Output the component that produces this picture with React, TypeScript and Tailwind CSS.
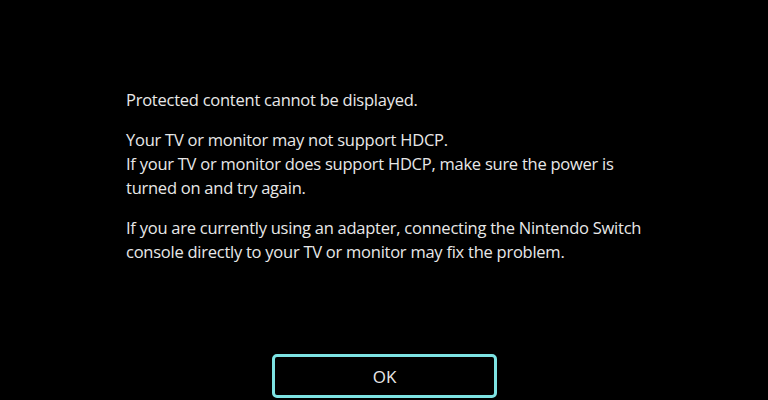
export default function App() {
  return (
    <main
      className="h-[400px] w-[768px] overflow-hidden bg-black text-[#e8e8e8]"
      style={{ fontFamily: '"Open Sans", "Noto Sans", sans-serif' }}
    >
      <div className="pl-[126px] pt-[88px] text-[16.5px] leading-[24px] tracking-[-0.25px]">
        <p>Protected content cannot be displayed.</p>
        <p className="mt-4">
          Your TV or monitor may not support HDCP.
          <br />
          If your TV or monitor does support HDCP, make sure the power is
          <br />
          turned on and try again.
        </p>
        <p className="mt-4">
          If you are currently using an adapter, connecting the Nintendo Switch
          <br />
          console directly to your TV or monitor may fix the problem.
        </p>
      </div>
      <div className="mt-[90px] flex justify-center pl-[1px]">
        <button className="flex h-[44px] w-[225px] items-center justify-center rounded-[5px] border-[3px] border-[#7de3e3] pt-[1px] text-[17px] text-[#e8e8e8]">
          OK
        </button>
      </div>
    </main>
  );
}
